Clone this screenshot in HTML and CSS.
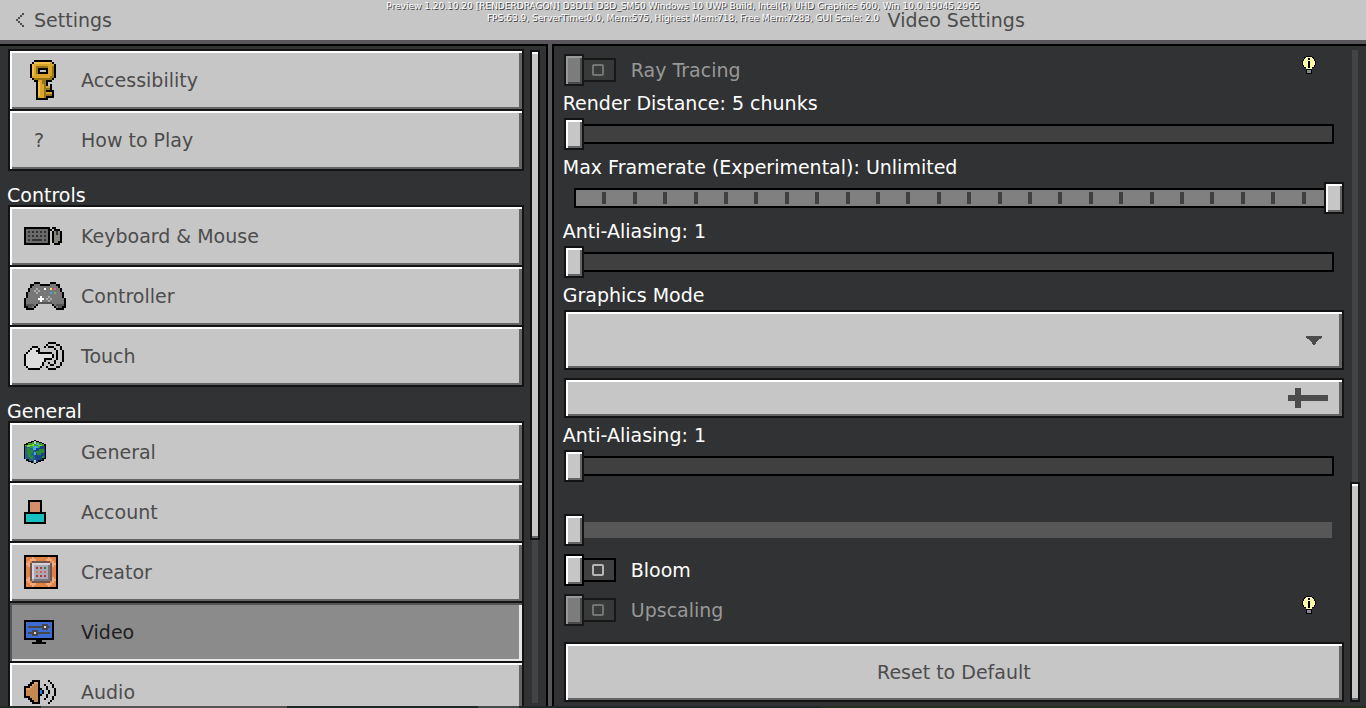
FILE: index.html
```html
<!DOCTYPE html>
<html lang="en">

<head>
    <meta charset="UTF-8">
    <meta name="viewport" content="width=device-width, initial-scale=1.0">
    <title>Video Settings</title>
    <link rel="stylesheet" href="styles.css">
</head>

<body>
    <header class="topbar">
        <button class="back">
            <svg width="8" height="14" viewBox="0 0 4 7"><path d="M3 0h1v1H3zM2 1h1v1H2zM1 2h1v1H1zM0 3h1v1H0zM1 4h1v1H1zM2 5h1v1H2zM3 6h1v1H3z" fill="#4c4c4c"/></svg>
            Settings
        </button>
        <h1>Video Settings</h1>
        <div class="debug">
            <p>Preview 1.20.10.20 [RENDERDRAGON] D3D11 D3D_SM50 Windows 10 UWP Build, Intel(R) UHD Graphics 600, Win 10.0.19045.2965</p>
            <p>FPS:63.9, ServerTime:0.0, Mem:575, Highest Mem:718, Free Mem:7283, GUI Scale: 2.0</p>
        </div>
    </header>

    <main class="panes">
        <nav class="sidebar">
            <div class="list">
                <div class="group">
                    <button class="item">
                        <span class="icon">
                            <svg width="32" height="40" viewBox="-3 0 16 20">
                                <path d="M2 0H11V1H12V2H13V9H12V10H11V11H9V12H11V15H12V19H9V20H3V11H2V10H1V9H0V2H1V1H2Z" fill="#000"/>
                                <path d="M2 1H11V2H12V9H11V10H2V9H1V2H2ZM4 10H8V19H4ZM8 13H10V15H8ZM8 16H11V18H8Z" fill="#d9a62a"/>
                                <path d="M2 1H10V2H2V8H1V2H2ZM4 11H5V18H4Z" fill="#f2c048"/>
                                <path d="M11 3H12V9H11V10H2V9H10V8H11ZM6 10H8V19H7V12H6ZM3 3H9V4H4V7H3ZM8 14H10V15H8ZM8 17H11V18H8Z" fill="#99731a"/>
                                <path d="M4 4H9V7H4Z" fill="#000"/>
                                <path d="M5 5H8V6H5ZM9 12H10V13H9Z" fill="#c6c6c6"/>
                            </svg>
                        </span>
                        Accessibility
                    </button>
                    <button class="item"><span class="icon question">?</span>How to Play</button>
                </div>

                <h2>Controls</h2>
                <div class="group">
                    <button class="item">
                        <span class="icon">
                            <svg width="38" height="18" viewBox="0 0 19 9">
                                <path d="M0 0H13V1H14V0H16V1H18V2H19V8H18V9H15V8H14V2H13V9H0Z" fill="#000"/>
                                <path d="M1 1H12V8H1Z" fill="#6b6b6b"/>
                                <path d="M2 2h1v1H2zM4 2h1v1H4zM6 2h1v1H6zM8 2h1v1H8zM10 2h1v1h-1zM2 4h1v1H2zM4 4h1v1H4zM6 4h1v1H6zM8 4h1v1H8zM10 4h1v1h-1zM2 6h1v1H2zM4 6h5v1H4zM10 6h1v1h-1z" fill="#333"/>
                                <path d="M15 2H18V7H17V8H15Z" fill="#85857e"/>
                                <path d="M16 2H17V4H16Z" fill="#333"/>
                                <path d="M14 1H15V2H14Z" fill="#c6c6c6"/>
                            </svg>
                        </span>
                        Keyboard &amp; Mouse
                    </button>
                    <button class="item">
                        <span class="icon">
                            <svg width="42" height="28" viewBox="0 0 21 14">
                                <path d="M5 0H8V1H13V0H16V1H18V3H19V5H20V8H21V13H20V14H16V13H15V12H14V11H7V12H6V13H5V14H1V13H0V8H1V5H2V3H3V1H5Z" fill="#000"/>
                                <path d="M5 1H8V2H13V1H16V2H17V3H18V5H19V8H20V12H19V13H16V12H15V11H14V10H7V11H6V12H5V13H2V12H1V8H2V5H3V3H4V2H5Z" fill="#777"/>
                                <path d="M1 11H5V12H4V13H2V12H1ZM16 11H20V12H19V13H17V12H16ZM7 10H14V11H7Z" fill="#555"/>
                                <path d="M6 3h1v1H6zM5 4h1v1H5zM7 4h1v1H7zM6 5h1v1H6zM12 7h1v1h-1zM11 8h1v1h-1zM13 8h1v1h-1zM12 9h1v1h-1z" fill="#aaa"/>
                                <path d="M10 3h1v1h-1zM8 7h1v1h1v1H9v1H8V9H7V8h1z" fill="#fff"/>
                                <path d="M13 3h1v1h-1z" fill="#f6e06a"/>
                                <path d="M15 3h1v1h-1z" fill="#f2577e"/>
                                <path d="M13 5h1v1h-1z" fill="#45a6e5"/>
                                <path d="M15 5h1v1h-1z" fill="#77b06a"/>
                            </svg>
                        </span>
                        Controller
                    </button>
                    <button class="item">
                        <span class="icon">
                            <svg width="40" height="28" viewBox="0 0 20 14">
                                <path d="M4 2H7V3H8V5H14V6H15V8H14V9H11V10H10V12H9V13H8V14H2V13H1V12H0V6H1V5H2V4H3V3H4Z" fill="#000"/>
                                <path d="M4 3H7V4H6V5H7V6H14V8H10V10H9V12H8V13H2V12H1V6H2V5H3V4H4Z" fill="#dedede"/>
                                <path d="M12 0H16V1H12ZM11 1H12V2H11ZM10 2H11V3H10ZM16 1H18V2H16ZM18 2H19V4H18ZM19 4H20V10H19ZM18 10H19V12H18ZM16 12H18V13H16ZM12 13H16V14H12ZM11 12H12V13H11ZM12 2H15V3H12ZM15 3H16V4H15ZM16 4H17V9H16ZM15 9H16V11H15ZM13 11H15V12H13ZM12 10H13V11H12Z" fill="#000"/>
                            </svg>
                        </span>
                        Touch
                    </button>
                </div>

                <h2>General</h2>
                <div class="group">
                    <button class="item">
                        <span class="icon">
                            <svg width="22" height="24" viewBox="0 0 22 24">
                                <path d="M10 0H12V1H15V2H18V3H20V4H22V19H20V21H17V22H14V23H12V24H10V23H7V22H4V21H2V19H0V4H2V3H4V2H7V1H10Z" fill="#000"/>
                                <path d="M10 1H12V2H15V3H18V4H20V6H16V8H11V9H6V7H1V5H4V3H8V2H10Z" fill="#3a9d2c"/>
                                <path d="M1 6H6V8H11V23H9V21H5V19H1Z" fill="#24618f"/>
                                <path d="M11 8H16V6H21V18H18V20H14V22H11Z" fill="#154584"/>
                                <path d="M3 8H6V10H9V13H7V16H9V19H6V17H4V14H3ZM12 11H15V9H20V13H17V15H13V13H12ZM18 16H20V18H18Z" fill="#2c8a35"/>
                                <path d="M3 5H8V4H10V6H6V7H3ZM14 5H18V6H14Z" fill="#7ad83c"/>
                                <path d="M9 6H14V8H12V10H9ZM13 3H15V5H12V4H13ZM10 12H12V15H10Z" fill="#43a9df"/>
                                <path d="M10 1H12V4H10ZM10 20H12V23H10Z" fill="#bcc8d0"/>
                            </svg>
                        </span>
                        General
                    </button>
                    <button class="item">
                        <span class="icon">
                            <svg width="22" height="24" viewBox="0 0 11 12">
                                <path d="M2 0H9V6H11V12H0V6H2Z" fill="#000"/>
                                <path d="M3 1H8V6H3Z" fill="#d38f6c"/>
                                <path d="M1 7H10V11H1Z" fill="#16c0bf"/>
                            </svg>
                        </span>
                        Account
                    </button>
                    <button class="item">
                        <span class="icon">
                            <svg width="34" height="34" viewBox="0 0 17 17">
                                <path d="M0 0H17V17H0Z" fill="#000"/>
                                <path d="M1 1H16V16H1Z" fill="#df8344"/>
                                <path d="M4 1H5V2H6V3H3V2H4ZM12 1H13V2H14V3H11V2H12ZM1 4H2V3H3V6H2V5H1ZM15 4H16V5H15V6H14V3H15ZM1 12H2V11H3V14H2V13H1ZM15 12H16V13H15V14H14V11H15ZM3 14H6V15H5V16H4V15H3ZM11 14H14V15H13V16H12V15H11Z" fill="#f0aa80"/>
                                <path d="M4 3H13V4H14V13H13V14H4V13H3V4H4Z" fill="#705548"/>
                                <path d="M4 4H13V13H4Z" fill="#aaaab6"/>
                                <path d="M4 4H13V5H5V12H4Z" fill="#d4d4de"/>
                                <path d="M12 5H13V13H5V12H12Z" fill="#777783"/>
                                <path d="M6 6h1v1H6zM8 6h1v1H8zM6 10h1v1H6zM8 10h1v1H8zM10 10h1v1h-1z" fill="#b93035"/>
                                <path d="M10 6h1v1h-1z" fill="#397a2b"/>
                                <path d="M6 8h1v1H6z" fill="#cf8a38"/>
                                <path d="M8 8h1v1H8zM10 8h1v1h-1z" fill="#e4565a"/>
                            </svg>
                        </span>
                        Creator
                    </button>
                    <button class="item selected" aria-current="page">
                        <span class="icon">
                            <svg width="30" height="24" viewBox="0 0 15 12">
                                <path d="M0 0H15V10H9V11H11V12H4V11H6V10H0Z" fill="#000"/>
                                <path d="M1 1H14V9H1Z" fill="#3d6dd2"/>
                                <path d="M2 3H9V2H12V3H13V4H12V5H9V4H2ZM2 6H4V5H7V6H13V7H7V8H4V7H2Z" fill="#484848"/>
                                <path d="M10 3h1v1h-1zM5 6h1v1H5z" fill="#ddd"/>
                            </svg>
                        </span>
                        Video
                    </button>
                    <button class="item">
                        <span class="icon">
                            <svg width="32" height="24" viewBox="0 0 16 12">
                                <path d="M4 0H8V4H9V5H10V7H9V8H8V12H4V11H3V10H2V9H0V3H2V2H3V1H4Z" fill="#000"/>
                                <path d="M5 1H7V11H5V10H4V9H3V8H1V4H3V3H4V2H5Z" fill="#c58950"/>
                                <path d="M5 1H7V2H5V3H4V4H3V5H1V4H3V3H4V2H5Z" fill="#dda36a"/>
                                <path d="M8 5h1v2H8z" fill="#1c7df0"/>
                                <path d="M10 2h1v1h-1zM11 3h1v2h-1zM12 5h1v2h-1zM11 7h1v2h-1zM10 9h1v1h-1zM12 0h1v1h-1zM13 1h1v1h-1zM14 2h1v2h-1zM15 4h1v4h-1zM14 8h1v2h-1zM13 10h1v1h-1zM12 11h1v1h-1z" fill="#000"/>
                            </svg>
                        </span>
                        Audio
                    </button>
                </div>
            </div>
            <div class="scrollbar"><div class="thumb" style="height: 75%"></div></div>
        </nav>

        <section class="content">
            <div class="options">
                <div class="toggle">
                    <input type="checkbox" id="raytracing" disabled>
                    <label for="raytracing">Ray Tracing</label>
                    <svg class="bulb" width="14" height="18" viewBox="0 0 14 18">
                        <path d="M4 0H10V1H12V3H13V5H14V9H13V11H12V12H10V18H4V12H2V11H1V9H0V5H1V3H2V1H4Z" fill="#000"/>
                        <path d="M4 1H10V2H11V3H12V5H13V9H12V11H10V13H4V11H2V9H1V5H2V3H3V2H4Z" fill="#fdf9a8"/>
                        <path d="M5 14H9V17H5Z" fill="#888"/>
                        <path d="M6 2H8V4H6ZM6 5H8V12H6Z" fill="#000"/>
                    </svg>
                </div>

                <label class="caption" for="distance">Render Distance: 5 chunks</label>
                <input class="slider" type="range" id="distance" min="5" max="96" value="5">

                <label class="caption" for="framerate">Max Framerate (Experimental): Unlimited</label>
                <input class="slider stepped" type="range" id="framerate" min="0" max="25" value="25">

                <label class="caption" for="aliasing">Anti-Aliasing: 1</label>
                <input class="slider" type="range" id="aliasing" min="1" max="16" value="1">

                <label class="caption" for="graphics">Graphics Mode</label>
                <div class="dropdown">
                    <select id="graphics"><option></option></select>
                    <svg width="16" height="9" viewBox="0 0 16 9"><path d="M0 0H16V2H15V3H13V4H12V5H11V6H10V8H9V9H7V8H6V6H5V5H4V4H3V3H1V2H0Z" fill="#4c4c4c"/></svg>
                </div>
                <button class="btn expand" aria-label="More">
                    <svg width="40" height="20" viewBox="0 0 40 20"><path d="M7 0H13V7H40V13H13V20H7V13H0V7H7Z" fill="#4c4c4c"/></svg>
                </button>

                <label class="caption" for="aliasing2">Anti-Aliasing: 1</label>
                <input class="slider" type="range" id="aliasing2" min="1" max="16" value="1">

                <label class="caption" for="extra"></label>
                <input class="slider plain" type="range" id="extra" value="0" aria-label="Value">

                <div class="toggle">
                    <input type="checkbox" id="bloom">
                    <label for="bloom">Bloom</label>
                </div>
                <div class="toggle">
                    <input type="checkbox" id="upscaling" disabled>
                    <label for="upscaling">Upscaling</label>
                    <svg class="bulb" width="14" height="18" viewBox="0 0 14 18">
                        <path d="M4 0H10V1H12V3H13V5H14V9H13V11H12V12H10V18H4V12H2V11H1V9H0V5H1V3H2V1H4Z" fill="#000"/>
                        <path d="M4 1H10V2H11V3H12V5H13V9H12V11H10V13H4V11H2V9H1V5H2V3H3V2H4Z" fill="#fdf9a8"/>
                        <path d="M5 14H9V17H5Z" fill="#888"/>
                        <path d="M6 2H8V4H6ZM6 5H8V12H6Z" fill="#000"/>
                    </svg>
                </div>
                <button class="btn reset">Reset to Default</button>
            </div>
            <div class="scrollbar end"><div class="thumb" style="height: 33.7%"></div></div>
        </section>
    </main>

    <footer class="edge"></footer>
</body>

</html>
```

FILE: styles.css
```css
*,
*::before,
*::after {
    margin: 0;
    padding: 0;
    box-sizing: border-box;
}

body {
    display: flex;
    flex-direction: column;
    height: 100vh;
    overflow: hidden;
    background-color: #58565a;
    color: #fff;
    font-family: "DejaVu Sans", sans-serif;
    font-size: 19px;
    line-height: 24px;
}

button,
select {
    font: inherit;
    color: #4c4c4c;
}

svg {
    display: block;
    shape-rendering: crispEdges;
}

/* top bar */
.topbar {
    position: relative;
    display: flex;
    align-items: center;
    height: 40px;
    flex-shrink: 0;
    background-color: #c6c6c6;
    color: #4c4c4c;
}

.back {
    display: flex;
    align-items: center;
    gap: 10px;
    width: 40%;
    padding-left: 16px;
    border: none;
    background: none;
}

h1 {
    flex: 1;
    font-size: 19px;
    font-weight: normal;
    text-align: center;
}

.debug {
    position: absolute;
    top: 0;
    left: 0;
    right: 0;
    font-size: 9px;
    line-height: 12px;
    text-align: center;
    color: #fff;
    text-shadow: 1px 1px #3e3e3e;
}

/* panes */
.panes {
    display: flex;
    flex: 1;
    gap: 4px;
    min-height: 0;
    margin-top: 4px;
}

.sidebar,
.content {
    display: flex;
    background-color: #313233;
    border-top: 2px solid #000;
    overflow: hidden;
}

.sidebar {
    width: 40.1%;
    padding: 3px 6px 0 8px;
    gap: 6px;
    border-right: 2px solid #000;
}

.content {
    flex: 1;
    padding: 4px 6px 0 10px;
    gap: 6px;
    border-left: 2px solid #000;
}

.list {
    flex: 1;
}

h2 {
    height: 34px;
    padding-top: 12px;
    margin-left: -1px;
    font-size: 19px;
    font-weight: normal;
}

.group {
    display: flex;
    flex-direction: column;
    border: 2px solid #131313;
    gap: 2px;
    background-color: #131313;
}

.item {
    display: flex;
    align-items: center;
    height: 58px;
    padding-left: 14px;
    border: none;
    background-color: #c6c6c6;
    box-shadow: inset 2px 2px #fff, inset -3px -2px #656465;
}

.item.selected {
    background-color: #8b8b8b;
    color: #1e1e1e;
    box-shadow: inset 2px 2px #565656, inset -3px -2px #e6e6e6;
}

.icon {
    width: 57px;
    text-align: left;
}

.question {
    padding-left: 10px;
}

/* scrollbars */
.scrollbar {
    width: 10px;
    margin: 1px 0 3px;
    background: linear-gradient(#434343, #434343) center / 6px 100% no-repeat;
}

.scrollbar.end {
    display: flex;
    align-items: flex-end;
    margin: 0 0 4px;
}

.thumb {
    width: 10px;
    border: 2px solid #131313;
    background-color: #c6c6c6;
    box-shadow: inset 0 2px #fff, inset 0 -2px #656465;
}

/* options */
.options {
    display: flex;
    flex-direction: column;
    flex: 1;
    padding-top: 4px;
}

.caption {
    height: 32px;
    padding-top: 5px;
    margin-left: -1px;
}

.slider {
    appearance: none;
    height: 32px;
    background:
        linear-gradient(#404040, #404040) center / calc(100% - 24px) 16px no-repeat,
        linear-gradient(#000, #000) center / calc(100% - 20px) 20px no-repeat;
}

.slider.stepped {
    background:
        repeating-linear-gradient(to right, transparent 0, transparent calc(4% - 4px), #404040 calc(4% - 4px), #404040 4%) 12px center / calc(100% - 20px) 12px no-repeat,
        linear-gradient(#808080, #808080) center / calc(100% - 24px) 16px no-repeat,
        linear-gradient(#000, #000) center / calc(100% - 20px) 20px no-repeat;
}

.slider.plain {
    background: linear-gradient(#575757, #575757) center / calc(100% - 24px) 16px no-repeat;
}

.slider::-webkit-slider-thumb {
    appearance: none;
    box-sizing: border-box;
    width: 20px;
    height: 32px;
    border: 2px solid #131313;
    background-color: #c6c6c6;
    box-shadow: inset 2px 2px #fff, inset -2px -2px #656465;
}

.dropdown {
    display: grid;
    align-items: center;
    margin-bottom: 8px;
}

.dropdown select,
.dropdown svg {
    grid-area: 1 / 1;
}

.dropdown select {
    appearance: none;
    height: 60px;
    border-radius: 0;
}

.dropdown svg {
    justify-self: end;
    margin-right: 22px;
    pointer-events: none;
}

.btn,
.dropdown select {
    border: 2px solid #131313;
    background-color: #c6c6c6;
    box-shadow: inset 2px 2px #fff, inset -3px -2px #656465;
}

.expand {
    display: flex;
    align-items: center;
    justify-content: flex-end;
    height: 40px;
    padding-right: 14px;
}

.reset {
    height: 60px;
    margin-top: 8px;
}

.toggle {
    display: flex;
    align-items: center;
    height: 32px;
}

.toggle label {
    flex: 1;
    margin-left: 15px;
}

.toggle input {
    appearance: none;
    display: flex;
    align-items: center;
    gap: 8px;
    width: 52px;
    height: 32px;
    background:
        linear-gradient(#404040, #404040) 20px center / 30px 20px no-repeat,
        linear-gradient(#000, #000) right center / 34px 24px no-repeat;
}

.toggle input::before {
    content: "";
    width: 20px;
    height: 32px;
    border: 2px solid #000;
    background-color: #c6c6c6;
    box-shadow: inset 2px 2px #fff, inset -2px -2px #656465;
}

.toggle input::after {
    content: "";
    width: 12px;
    height: 12px;
    border: 2px solid #b5b5b5;
    border-radius: 2px;
}

.toggle input:disabled {
    opacity: 0.5;
}

.toggle input:disabled + label {
    color: #989898;
}

.slider.plain + .toggle,
.toggle + .toggle {
    margin-top: 8px;
}

.toggle + .reset {
    margin-top: 16px;
}

.bulb {
    align-self: flex-start;
    margin: 2px 28px 0 0;
}

/* strip of the world behind the menu */
.edge {
    height: 2px;
    flex-shrink: 0;
    background: linear-gradient(to right, #222a24 0 3%, #555 3% 21%, #1d2829 21% 35%, #444b4c 35% 38%, #1d2829 38% 60%, #24301c 60% 100%);
}
```
